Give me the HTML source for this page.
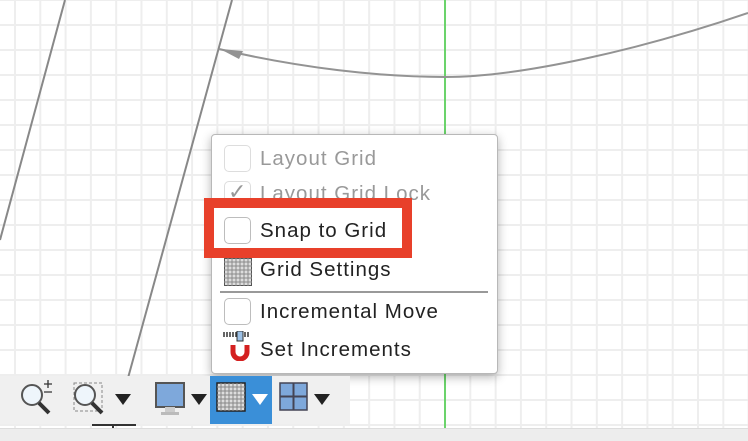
<!DOCTYPE html>
<html><head><meta charset="utf-8"><style>
body{margin:0;width:748px;height:440px;overflow:hidden;background:#fff;position:relative;font-family:"Lucida Grande","Liberation Sans",sans-serif}
.grid{position:absolute;left:0;top:0;width:748px;height:440px;
background-image:linear-gradient(to right,#eeeeee 2px,transparent 2px),linear-gradient(to bottom,#eeeeee 2px,transparent 2px);
background-size:25.3px 25px;background-position:14px 24px}
.menu{position:absolute;left:211px;top:134px;width:285px;height:238px;background:#fff;border:1px solid #b8b8b8;border-radius:4px;box-shadow:0 3px 10px rgba(0,0,0,.3)}
.item{position:absolute;left:48px;font-size:20.5px;letter-spacing:1px;color:#222;line-height:24px;white-space:nowrap}
.cb{position:absolute;left:12px;width:25px;height:25px;border:1px solid #bdbdbd;border-radius:5px;background:#fff}
.dis{color:#999}
.red{position:absolute;left:204px;top:198px;width:188px;height:40px;border:10px solid #e8402a}
.tb{position:absolute;left:0;top:376px;width:350px;height:48px;background:#f0f0f0}
.tri{position:absolute;width:0;height:0;border-left:8px solid transparent;border-right:8px solid transparent;border-top:11px solid #222}
</style></head><body>
<div class="grid"></div>
<svg style="position:absolute;left:0;top:0" width="748" height="440">
<line x1="445" y1="0" x2="445" y2="440" stroke="#6bd36b" stroke-width="2"/>
<line x1="65" y1="0" x2="0" y2="240" stroke="#888" stroke-width="2"/>
<line x1="232" y1="0" x2="128" y2="378" stroke="#888" stroke-width="2"/>
<path d="M219,49 C300,68 380,77 445,77 C520,77 640,50 748,13" fill="none" stroke="#939393" stroke-width="2"/>
<path d="M220,49 L243,51 L239,59 Z" fill="#939393"/>
</svg>
<div class="menu">
<div class="cb" style="top:10px;border-color:#ddd"></div><div class="item dis" style="top:12px">Layout Grid</div>
<div class="cb" style="top:46px;border-color:#ddd"></div><div class="item dis" style="top:47px">Layout Grid Lock</div>
<div style="position:absolute;left:16px;top:44px;font-size:22px;color:#999">✓</div>
<div class="cb" style="top:82px"></div><div class="item" style="top:84px">Snap to Grid</div>
<svg style="position:absolute;left:12px;top:123px" width="28" height="28"><rect x="0.5" y="0.5" width="27" height="27" fill="#ddd" stroke="#555"/><path d="M4 0V28M8 0V28M12 0V28M16 0V28M20 0V28M24 0V28M0 4H28M0 8H28M0 12H28M0 16H28M0 20H28M0 24H28" stroke="#8a8a8a" stroke-width="1"/></svg>
<div class="item" style="top:123px">Grid Settings</div>
<div style="position:absolute;left:8px;top:156px;width:268px;height:2px;background:#999"></div>
<div class="cb" style="top:163px"></div><div class="item" style="top:165px">Incremental Move</div>
<svg style="position:absolute;left:11px;top:196px" width="30" height="30"><path d="M1 1V6M4 1V6M7 1V6M10 1V6M13 1V6M22 1V6M25 1V6" stroke="#333" stroke-width="1.5"/><rect x="14" y="0" width="6" height="10" fill="#9bc0e6" stroke="#333"/><path d="M10 14V21A7 7 0 0 0 24 21V14" fill="none" stroke="#d42020" stroke-width="5"/></svg>
<div class="item" style="top:203px">Set Increments</div>
</div>
<div class="red"></div>
<div class="tb">
<div style="position:absolute;left:210px;top:0;width:62px;height:48px;background:#3a8fd8"></div>
<svg style="position:absolute;left:0;top:0" width="350" height="48">
<circle cx="32" cy="19" r="10" fill="#eef5fb" stroke="#555" stroke-width="2"/><line x1="39" y1="27" x2="49" y2="37" stroke="#333" stroke-width="4"/><path d="M44 8H52M48 4V12M44 16H52" stroke="#333" stroke-width="1.3"/>
<rect x="74" y="7" width="28" height="28" fill="none" stroke="#888" stroke-dasharray="3 2"/>
<circle cx="85" cy="19" r="10" fill="#eef5fb" stroke="#555" stroke-width="2"/><line x1="92" y1="27" x2="102" y2="37" stroke="#333" stroke-width="4"/>
<rect x="156" y="7" width="28" height="24" fill="#7ea8db" stroke="#555" stroke-width="2"/><rect x="165" y="31" width="10" height="5" fill="#ccc"/><rect x="161" y="36" width="18" height="3" fill="#bbb"/>
<rect x="217" y="7" width="28" height="28" fill="#ddd" stroke="#222" stroke-width="1.5"/>
<path d="M221 7V35M225 7V35M229 7V35M233 7V35M237 7V35M241 7V35M217 11H245M217 15H245M217 19H245M217 23H245M217 27H245M217 31H245" stroke="#888" stroke-width="1"/>
<rect x="280" y="7" width="27" height="27" fill="#7ea8db" stroke="#445" stroke-width="1.5"/><path d="M293.5 7V34M280 20.5H307" stroke="#445" stroke-width="2"/>
</svg>
<div class="tri" style="left:115px;top:18px"></div>
<div class="tri" style="left:191px;top:18px"></div>
<div class="tri" style="left:252px;top:18px;border-top-color:#fff"></div>
<div class="tri" style="left:314px;top:18px"></div>
</div>
<div style="position:absolute;left:92px;top:424px;width:44px;height:2px;background:#333"></div>
<div style="position:absolute;left:112px;top:424px;width:2px;height:6px;background:#333"></div>
<div style="position:absolute;left:0;top:428px;width:748px;height:12px;background:#ededed;border-top:1px solid #ddd"></div>
</body></html>
